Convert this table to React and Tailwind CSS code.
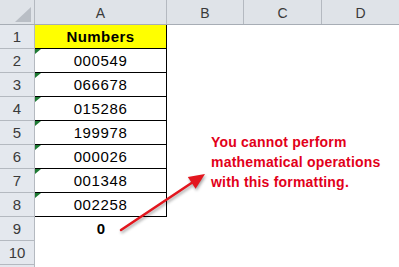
const values = ["000549", "066678", "015286", "199978", "000026", "001348", "002258"];

const font = { fontFamily: '"Liberation Sans", Arial, sans-serif' };

// little green "number stored as text" flag in the cell corner
const TextFlag = () => (
  <svg className="absolute left-0 top-0" width="6" height="5" viewBox="0 0 6 5">
    <polygon points="0,0 6,0 0,5" fill="#1d7a33" />
  </svg>
);

const RowHead = ({ n }) => (
  <div className="w-[35px] shrink-0 border-r border-b border-[#b4b9c0] bg-[#e4e8ee] flex items-center justify-center pt-[2px] text-[15px] text-[#3a3a3a]">
    {n}
  </div>
);

const Filler = () => (
  <>
    <div className="w-[77px] shrink-0" />
    <div className="w-[78px] shrink-0" />
    <div className="w-[77px] shrink-0" />
  </>
);

export default function App() {
  return (
    <div className="relative w-[399px] h-[267px] overflow-hidden bg-white" style={font}>
      {/* column headers */}
      <div className="flex h-[25px] bg-[#dfe3e8] border-b border-[#a7adb5] text-[14px] text-[#3a3a3a]">
        <div className="relative w-[35px] shrink-0 border-r border-[#b4b9c0]">
          <svg className="absolute left-[15px] top-[7px]" width="16" height="15" viewBox="0 0 16 15">
            <polygon points="16,0 16,15 0,15" fill="#b9bec5" />
          </svg>
        </div>
        <div className="w-[132px] shrink-0 border-r border-[#b4b9c0] flex items-center justify-center pt-[2px]">A</div>
        <div className="w-[77px] shrink-0 border-r border-[#b4b9c0] flex items-center justify-center pt-[2px]">B</div>
        <div className="w-[78px] shrink-0 border-r border-[#b4b9c0] flex items-center justify-center pt-[2px]">C</div>
        <div className="w-[77px] shrink-0 flex items-center justify-center pt-[2px]">D</div>
      </div>

      {/* row 1 – heading */}
      <div className="flex h-[24px]">
        <RowHead n={1} />
        <div className="w-[132px] shrink-0 border-r border-b border-black bg-[#ffff00] flex items-center justify-center pt-[1px] text-[15px] font-bold tracking-[0.4px] text-black">
          Numbers
        </div>
        <Filler />
      </div>

      {/* rows 2-8 – text formatted numbers */}
      {values.map((v, i) => (
        <div key={v} className="flex h-[24px]">
          <RowHead n={i + 2} />
          <div className="relative w-[132px] shrink-0 border-r border-b border-black flex items-center justify-center pt-[1px] text-[15px] tracking-[0.6px] text-black">
            <TextFlag />
            {v}
          </div>
          <Filler />
        </div>
      ))}

      {/* row 9 – sum */}
      <div className="flex h-[24px]">
        <RowHead n={9} />
        <div className="w-[132px] shrink-0 flex items-center justify-center pt-[1px] text-[15px] font-bold text-black">0</div>
        <Filler />
      </div>

      <div className="flex h-[24px]">
        <RowHead n={10} />
        <div className="w-[132px] shrink-0" />
        <Filler />
      </div>
      <div className="flex h-[24px]">
        <RowHead n="" />
      </div>

      {/* callout */}
      <div className="absolute left-[211px] top-[132px] text-[14px] leading-[20px] font-bold text-[#e2001a] tracking-[0.2px]">
        <div>You cannot perform</div>
        <div>mathematical operations</div>
        <div>with this formatting.</div>
      </div>

      <svg className="absolute left-0 top-0 [filter:drop-shadow(1px_2px_1.5px_rgba(0,0,0,0.35))]" width="399" height="267" viewBox="0 0 399 267">
        <line x1="121" y1="230" x2="193" y2="182" stroke="#e3161e" strokeWidth="2.5" strokeLinecap="round" />
        <polygon points="205,174 195.6,188.7 187.8,177.1" fill="#e3161e" />
      </svg>
    </div>
  );
}
